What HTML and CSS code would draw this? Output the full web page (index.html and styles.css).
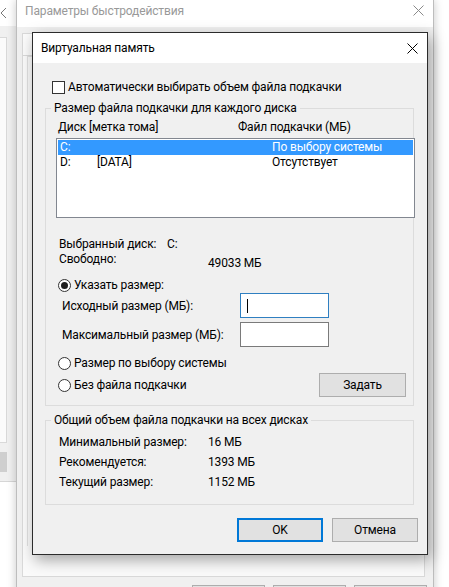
FILE: index.html
```html
<!DOCTYPE html>
<html>
  <head>
    <meta charset="utf-8">
    <title>Виртуальная память</title>
    <link rel="stylesheet" href="styles.css">
  </head>
  <body>

    <div class="desktop">

      <div class="win-back">
        <div class="back-title">
          <svg class="back-arrow" width="7" height="12" viewBox="0 0 7 12">
            <polyline points="6,1 1,6 6,11" fill="none" stroke="#777" stroke-width="1"/>
          </svg>
        </div>
        <div class="back-panel"></div>
        <div class="back-button"></div>
      </div>

      <div class="win-perf">
        <div class="perf-title">
          <span>Параметры быстродействия</span>
          <svg width="11" height="11" viewBox="0 0 11 11">
            <path d="M0.5 0.5 L10.5 10.5 M10.5 0.5 L0.5 10.5" stroke="#8a8a8a" stroke-width="1"/>
          </svg>
        </div>
        <div class="perf-body">
          <div class="perf-tab"></div>
          <div class="perf-panel">
            <div class="perf-inner"></div>
          </div>
          <div class="perf-buttons">
            <div class="perf-btn"></div>
            <div class="perf-btn"></div>
            <div class="perf-btn"></div>
          </div>
        </div>
      </div>

      <div class="dialog">
        <div class="dlg-title">
          <span>Виртуальная память</span>
          <svg width="11" height="11" viewBox="0 0 11 11">
            <path d="M0.5 0.5 L10.5 10.5 M10.5 0.5 L0.5 10.5" stroke="#000" stroke-width="1"/>
          </svg>
        </div>

        <div class="dlg-body">

          <div class="auto-row">
            <div class="check"></div>
            <span>Автоматически выбирать объем файла подкачки</span>
          </div>

          <div class="group group-main">
            <div class="group-title">Размер файла подкачки для каждого диска</div>

            <div class="drive-head">
              <span>Диск [метка тома]</span>
              <span>Файл подкачки (МБ)</span>
            </div>

            <div class="listbox">
              <div class="list-row selected">
                <span>C:</span>
                <span></span>
                <span>По выбору системы</span>
              </div>
              <div class="list-row">
                <span>D:</span>
                <span>[DATA]</span>
                <span>Отсутствует</span>
              </div>
            </div>

            <div class="info-row first">
              <span class="info-label short">Выбранный диск:</span>
              <span>C:</span>
            </div>
            <div class="info-row second">
              <span class="info-label">Свободно:</span>
              <span class="free-value">49033 МБ</span>
            </div>

            <div class="radio-row custom">
              <div class="radio on"><span class="dot"></span></div>
              <span>Указать размер:</span>
            </div>

            <div class="size-row">
              <span class="size-label">Исходный размер (МБ):</span>
              <div class="field focused"><span class="caret"></span></div>
            </div>
            <div class="size-row max">
              <span class="size-label">Максимальный размер (МБ):</span>
              <div class="field"></div>
            </div>

            <div class="radio-row system">
              <div class="radio"></div>
              <span>Размер по выбору системы</span>
            </div>

            <div class="last-row">
              <div class="radio-line">
                <div class="radio"></div>
                <span>Без файла подкачки</span>
              </div>
              <div class="btn set-btn">Задать</div>
            </div>
          </div>

          <div class="group group-total">
            <div class="group-title">Общий объем файла подкачки на всех дисках</div>

            <div class="total-row first">
              <span class="info-label">Минимальный размер:</span>
              <span>16 МБ</span>
            </div>
            <div class="total-row">
              <span class="info-label">Рекомендуется:</span>
              <span>1393 МБ</span>
            </div>
            <div class="total-row">
              <span class="info-label">Текущий размер:</span>
              <span>1152 МБ</span>
            </div>
          </div>

          <div class="dlg-buttons">
            <div class="btn ok-btn">OK</div>
            <div class="btn">Отмена</div>
          </div>

        </div>
      </div>

    </div>

  </body>
</html>
```

FILE: styles.css
```css
* {
  box-sizing: border-box;
}

body {
  margin: 0;
  background-color: white;
  font-family: Roboto, "Noto Sans", sans-serif;
  font-size: 12px;
  letter-spacing: -0.15px;
  color: black;
}

.desktop {
  position: relative;
  width: 449px;
  height: 587px;
  overflow: hidden;
}

/* window far behind, on the left */
.win-back {
  position: absolute;
  left: 0;
  top: 0;
  width: 16px;
  height: 482px;
  background-color: #f0f0f0;
  border-bottom: 1px solid #d6d6d6;
}
.back-title {
  height: 26px;
  background-color: white;
  padding-top: 7px;
}
.back-arrow {
  display: block;
}
.back-panel {
  margin-top: 11px;
  width: 7px;
  height: 406px;
  background-color: #fbfbfb;
  border: 1px solid #d9d9d9;
  border-left: none;
}
.back-button {
  margin-top: 9px;
  width: 7px;
  height: 20px;
  background-color: #cfcfcf;
}

/* "Параметры быстродействия" window */
.win-perf {
  position: absolute;
  left: 16px;
  top: 0;
  width: 418px;
  height: 600px;
  background-color: #f0f0f0;
  border-left: 1px solid #bdbdbd;
  border-right: 1px solid #bdbdbd;
  box-shadow: 0 0 9px rgba(0, 0, 0, 0.22);
}
.perf-title {
  height: 27px;
  background-color: white;
  color: #999;
  display: flex;
  justify-content: space-between;
  align-items: flex-start;
  padding: 3px 9px 0 8px;
  line-height: 16px;
}
.perf-title svg {
  margin-top: 2px;
}
.perf-body {
  padding: 6px 6px 0 5px;
}
.perf-tab {
  width: 60px;
  height: 22px;
  background-color: #fbfbfb;
  border: 1px solid #d9d9d9;
  border-bottom: none;
}
.perf-panel {
  width: 403px;
  height: 522px;
  background-color: #fafafa;
  border: 1px solid #d9d9d9;
  padding: 0 0 0 4px;
}
.perf-inner {
  height: 490px;
  border-left: 1px solid #e0e0e0;
  border-top: 1px solid #e0e0e0;
}
.perf-buttons {
  display: flex;
  justify-content: flex-end;
  gap: 8px;
  margin-top: 8px;
}
.perf-btn {
  width: 73px;
  height: 24px;
  background-color: #e1e1e1;
  border: 1px solid #adadad;
}

/* "Виртуальная память" dialog */
.dialog {
  position: absolute;
  left: 32px;
  top: 32px;
  width: 396px;
  height: 523px;
  background-color: #f0f0f0;
  border: 1px solid #2b2b2b;
  box-shadow: 3px 5px 14px rgba(0, 0, 0, 0.35);
}
.dlg-title {
  height: 30px;
  background-color: white;
  display: flex;
  justify-content: space-between;
  align-items: center;
  padding: 0 9px 0 8px;
}
.dlg-body {
  padding: 0 9px 0 12px;
}

.auto-row {
  display: flex;
  align-items: center;
  gap: 3px;
  height: 16px;
  margin: 16px 0 0 7px;
}
.check {
  width: 13px;
  height: 13px;
  background-color: white;
  border: 1px solid #333;
}

.group {
  border: 1px solid #dcdcdc;
  margin-right: 4px;
}
.group-main {
  margin-top: 13px;
  height: 298px;
}
.group-total {
  margin-top: 14px;
  height: 85px;
}
.group-title {
  width: max-content;
  margin: -9px 0 0 5px;
  padding: 0 3px;
  line-height: 16px;
  background-color: #f0f0f0;
}

.drive-head {
  display: grid;
  grid-template-columns: 180px auto;
  height: 16px;
  line-height: 16px;
  margin-top: 3px;
  padding-left: 12px;
}

.listbox {
  height: 80px;
  margin: 3px -2px 0 10px;
  background-color: white;
  border: 1px solid #828790;
  padding: 1px;
}
.list-row {
  display: grid;
  grid-template-columns: 37px 175px auto;
  height: 15px;
  line-height: 15px;
  padding-left: 2px;
}
.list-row.selected {
  background-color: #3399ff;
  color: white;
}

.info-row {
  display: flex;
  height: 16px;
  line-height: 16px;
  padding-left: 13px;
}
.info-row.first {
  margin-top: 18px;
}
.info-row.second {
  margin-top: -1px;
}
.info-label {
  width: 149px;
}
.info-label.short {
  width: 108px;
}
.free-value {
  padding-top: 4px;
}

.radio-row,
.radio-line {
  display: flex;
  align-items: center;
  gap: 3px;
  height: 16px;
}
.radio-row {
  padding-left: 12px;
}
.radio-row.custom {
  margin-top: 10px;
}
.radio-row.system {
  margin-top: 8px;
}
.radio {
  width: 13px;
  height: 13px;
  border-radius: 50%;
  border: 1px solid #333;
  background-color: white;
  display: flex;
  align-items: center;
  justify-content: center;
}
.dot {
  width: 7px;
  height: 7px;
  border-radius: 50%;
  background-color: #1f1f1f;
}

.size-row {
  display: flex;
  align-items: center;
  height: 25px;
  padding-left: 16px;
}
.size-row.max {
  margin-top: 4px;
}
.size-label {
  width: 178px;
}
.field {
  width: 89px;
  height: 25px;
  background-color: white;
  border: 1px solid #7a7a7a;
  display: flex;
  align-items: center;
}
.field.focused {
  border-color: #2f7fc1;
}
.caret {
  width: 1px;
  height: 14px;
  margin-left: 6px;
  background-color: black;
}

.last-row {
  display: flex;
  justify-content: space-between;
  align-items: center;
  height: 24px;
  margin-top: 2px;
  padding: 0 7px 0 12px;
}

.btn {
  height: 24px;
  width: 86px;
  background-color: #e1e1e1;
  border: 1px solid #adadad;
  display: flex;
  align-items: center;
  justify-content: center;
}
.set-btn {
  width: 87px;
}
.ok-btn {
  border: 2px solid #0078d7;
}

.total-row {
  display: flex;
  height: 20px;
  line-height: 20px;
  padding-left: 13px;
}
.total-row.first {
  margin-top: 4px;
}

.dlg-buttons {
  display: flex;
  justify-content: flex-end;
  gap: 9px;
  margin-top: 13px;
}
```
